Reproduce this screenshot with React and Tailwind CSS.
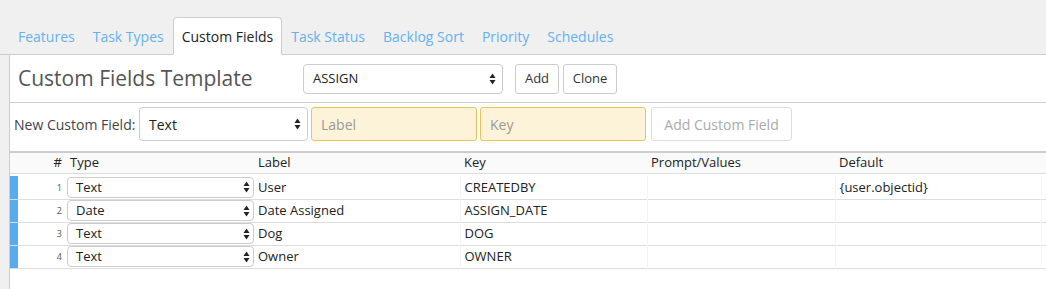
import React from 'react';

const tabs = ['Features', 'Task Types', 'Custom Fields', 'Task Status', 'Backlog Sort', 'Priority', 'Schedules'];

const rows = [
  { n: 1, type: 'Text', label: 'User', key: 'CREATEDBY', def: '{user.objectid}' },
  { n: 2, type: 'Date', label: 'Date Assigned', key: 'ASSIGN_DATE', def: '' },
  { n: 3, type: 'Text', label: 'Dog', key: 'DOG', def: '' },
  { n: 4, type: 'Text', label: 'Owner', key: 'OWNER', def: '' },
];

const Arrows = () => (
  <svg width="7" height="12" viewBox="0 0 7 12" className="shrink-0">
    <path d="M3.5 0.5 L6.5 5 L0.5 5 Z" fill="#222" />
    <path d="M3.5 11.5 L6.5 7 L0.5 7 Z" fill="#222" />
  </svg>
);

const FakeSelect = ({ value, className }) => (
  <div className={`flex items-center justify-between border border-[#ccc] bg-white rounded-[4px] ${className}`}>
    <span>{value}</span>
    <Arrows />
  </div>
);

const App = () => {
  return (
    <div className="w-[1046px] h-[289px] overflow-hidden bg-[#f0f0f0] text-[#333]" style={{ fontFamily: '"Open Sans", sans-serif' }}>
      {/* tabs */}
      <div className="h-[55px] flex items-end pl-[9px] border-b border-[#ccc]">
        {tabs.map((t) => (
          <div
            key={t}
            className={
              t === 'Custom Fields'
                ? 'h-[38px] -mb-px px-[8px] flex items-center text-[14px] text-[#222] bg-white border border-[#ccc] border-b-white rounded-t-[4px]'
                : 'h-[38px] -mb-px px-[9px] flex items-center text-[14px] text-[#66b0ee]'
            }
          >
            {t}
          </div>
        ))}
      </div>

      {/* panel */}
      <div className="ml-[9px] bg-white border-l border-[#ccc] h-[234px]">
        <div className="h-[48px] flex items-center border-b border-[#ccc]">
          <div className="w-[293px] pl-[8px] text-[21px] text-[#555] leading-none">Custom Fields Template</div>
          <FakeSelect value="ASSIGN" className="w-[200px] h-[30px] pl-[9px] pr-[6px] text-[13px] text-[#222]" />
          <button className="ml-[12px] h-[30px] w-[44px] border border-[#ccc] rounded-[3px] bg-white text-[13px] text-[#333]">Add</button>
          <button className="ml-[4px] h-[30px] w-[54px] border border-[#ccc] rounded-[3px] bg-white text-[13px] text-[#333]">Clone</button>
        </div>

        <div className="h-[50px] flex items-start pt-[4px] border-b-[2px] border-[#ccc]">
          <div className="w-[129px] h-[34px] flex items-center pl-[4px] text-[14px] text-[#444]">New Custom Field:</div>
          <FakeSelect value="Text" className="w-[169px] h-[34px] pl-[9px] pr-[6px] text-[14px] text-[#222]" />
          <div className="ml-[3px] w-[166px] h-[34px] flex items-center pl-[9px] bg-[#fdf3d8] border border-[#e8c45a] rounded-[3px] text-[14px] text-[#999]">Label</div>
          <div className="ml-[3px] w-[166px] h-[34px] flex items-center pl-[9px] bg-[#fdf3d8] border border-[#e8c45a] rounded-[3px] text-[14px] text-[#999]">Key</div>
          <button className="ml-[5px] w-[141px] h-[34px] border border-[#ddd] rounded-[3px] bg-white text-[14px] text-[#aaa]">Add Custom Field</button>
        </div>

        <table className="border-collapse text-[13px] text-[#222] table-fixed w-[1100px]">
          <colgroup>
            <col className="w-[8px]" />
            <col className="w-[46px]" />
            <col className="w-[191px]" />
            <col className="w-[205px]" />
            <col className="w-[187px]" />
            <col className="w-[188px]" />
            <col className="w-[206px]" />
            <col />
          </colgroup>
          <thead>
            <tr className="bg-[#fafafa] h-[20px] border-b border-[#ddd]">
              <th></th>
              <th className="text-right font-normal pr-[2px]">#</th>
              <th className="text-left font-normal pl-[6px]">Type</th>
              <th className="text-left font-normal pl-[3px]">Label</th>
              <th className="text-left font-normal pl-[4px]">Key</th>
              <th className="text-left font-normal pl-[4px]">Prompt/Values</th>
              <th className="text-left font-normal pl-[4px]">Default</th>
              <th></th>
            </tr>
            <tr className="h-[3px]"><td colSpan={8}></td></tr>
          </thead>
          <tbody>
            {rows.map((r) => (
              <tr key={r.n} className="h-[23px] border-b border-[#ddd]">
                <td className="bg-[#5aabee] p-0"></td>
                <td className="text-right pr-[2px] text-[9px] text-[#555]">{r.n}</td>
                <td className="pl-[3px] py-0">
                  <FakeSelect value={r.type} className="w-[187px] h-[21px] pl-[8px] pr-[3px] text-[13px] text-[#222]" />
                </td>
                <td className="pl-[3px]">{r.label}</td>
                <td className="pl-[4px] border-l border-[#f4f4f4]">{r.key}</td>
                <td className="pl-[4px] border-l border-[#f4f4f4]">{''}</td>
                <td className="pl-[4px] border-l border-[#f4f4f4]">{r.def}</td>
                <td className="border-l border-[#f4f4f4]"></td>
              </tr>
            ))}
          </tbody>
        </table>
      </div>
    </div>
  );
};

export default App;
